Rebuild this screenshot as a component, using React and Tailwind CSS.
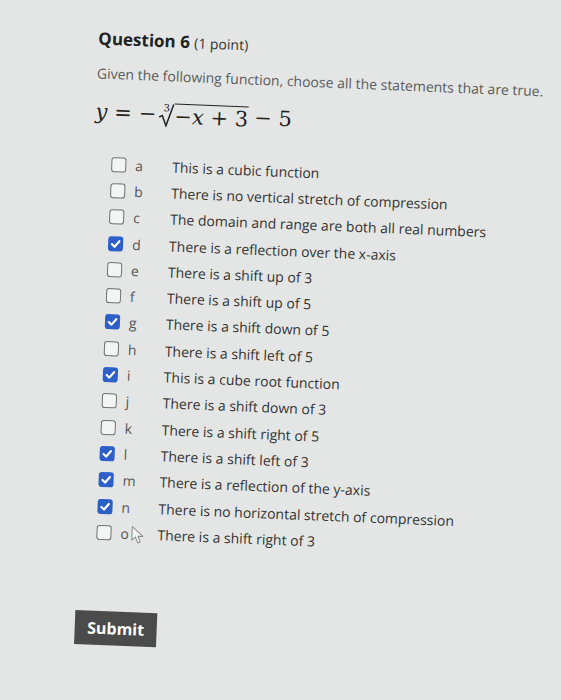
const options = [
  { l: "a", t: "This is a cubic function", c: false },
  { l: "b", t: "There is no vertical stretch of compression", c: false },
  { l: "c", t: "The domain and range are both all real numbers", c: false },
  { l: "d", t: "There is a reflection over the x-axis", c: true },
  { l: "e", t: "There is a shift up of 3", c: false },
  { l: "f", t: "There is a shift up of 5", c: false },
  { l: "g", t: "There is a shift down of 5", c: true },
  { l: "h", t: "There is a shift left of 5", c: false },
  { l: "i", t: "This is a cube root function", c: true },
  { l: "j", t: "There is a shift down of 3", c: false },
  { l: "k", t: "There is a shift right of 5", c: false },
  { l: "l", t: "There is a shift left of 3", c: true },
  { l: "m", t: "There is a reflection of the y-axis", c: true },
  { l: "n", t: "There is no horizontal stretch of compression", c: true },
  { l: "o", t: "There is a shift right of 3", c: false },
];

const Box = ({ checked }) =>
  checked ? (
    <span className="w-[15px] h-[15px] rounded-[3px] bg-[#2d5fc9] flex items-center justify-center shrink-0">
      <svg width="11" height="11" viewBox="0 0 12 12" fill="none">
        <path d="M2 6.5 L5 9.2 L10 3" stroke="#fff" strokeWidth="2.4" strokeLinecap="round" strokeLinejoin="round" />
      </svg>
    </span>
  ) : (
    <span className="w-[15px] h-[15px] rounded-[3px] border-[1.5px] border-[#6f7173] bg-[#f3f4f4] shrink-0" />
  );

export default function App() {
  return (
    <div className="w-[561px] h-[700px] overflow-hidden bg-[#e4e6e5] font-['Open_Sans',sans-serif]">
      <div className="w-[561px] h-[700px] rotate-[2.3deg] origin-[280px_350px] pl-[86px] pt-[34px]">
        <h2 className="text-[17px] leading-6 font-bold text-[#222]">
          Question 6 <span className="text-[14px] font-normal text-[#333]">(1 point)</span>
        </h2>
        <p className="mt-[12px] text-[14px] leading-5 text-[#5a5b5c]">
          Given the following function, choose all the statements that are true.
        </p>
        <div className="mt-[14px] flex items-end text-[21px] leading-7 text-[#222] font-['DejaVu_Serif',serif]">
          <span className="italic">y</span>
          <span className="mx-[7px]">=</span>
          <span>−</span>
          <span className="relative ml-[2px] flex items-end">
            <span className="absolute left-[5px] top-[0px] text-[10px] leading-none">3</span>
            <svg width="16" height="24" viewBox="0 0 16 24" className="mb-[1px]">
              <path d="M1 14 L4 12.5 L8 22.5 L15 1" stroke="#222" strokeWidth="1.5" fill="none" />
            </svg>
            <span className="border-t-[1.5px] border-[#222] leading-6">
              −<span className="italic">x</span> + 3
            </span>
          </span>
          <span className="ml-[6px]">− 5</span>
        </div>
        <div className="mt-[25px] pl-[18px] flex flex-col">
          {options.map((o) => (
            <div key={o.l} className="relative h-[26.3px] flex items-center text-[14px] text-[#333]">
              <Box checked={o.c} />
              <span className="w-[46px] pl-[9px] text-[#555]">{o.l}</span>
              <span>{o.t}</span>
              {o.l === "o" && (
                <svg width="16" height="20" viewBox="0 0 16 20" className="absolute left-[34px] top-[5px]">
                  <path d="M1.5 1.5 L1.5 15 L5 11.8 L7.5 17.5 L10 16.4 L7.6 10.8 L12.5 10.8 Z" fill="#f4f4f4" stroke="#8a8c8d" strokeWidth="1" strokeLinejoin="round" />
                </svg>
              )}
            </div>
          ))}
        </div>
        <button className="mt-[66px] w-[82px] h-[34px] bg-[#4b4b4c] text-white text-[16px] font-bold">
          Submit
        </button>
      </div>
    </div>
  );
}
